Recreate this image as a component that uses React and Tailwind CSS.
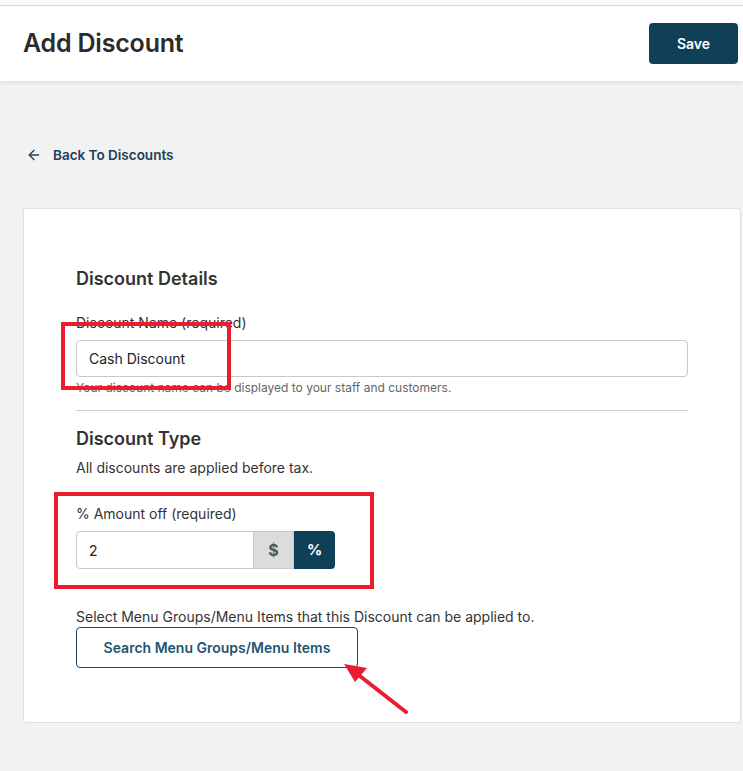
import { ArrowLeft } from "lucide-react";

const font = { fontFamily: "Inter, 'Noto Sans', sans-serif" };

const AddDiscount = () => {
  return (
    <div className="relative min-h-screen bg-[#f2f2f2] text-[#333]" style={font}>
      {/* Top strip */}
      <div className="h-[6px] bg-[#fafafa] border-b border-[#dcdcdc]" />

      {/* Header */}
      <div className="h-[75px] bg-white shadow-[0_2px_4px_rgba(0,0,0,0.08)] flex items-center justify-between pl-[23px] pr-[5px]">
        <h1 className="text-[25px] font-semibold text-[#2b2b2b] tracking-[-0.2px]">Add Discount</h1>
        <button className="w-[89px] h-[41px] rounded-[4px] bg-[#0f4058] text-white text-[14px] font-semibold">
          Save
        </button>
      </div>

      {/* Back link */}
      <div className="mt-[64px] ml-[26px] flex items-center gap-[11px] text-[#1b4059]">
        <ArrowLeft className="w-[16px] h-[16px]" strokeWidth={2} />
        <span className="text-[13.5px] font-semibold">Back To Discounts</span>
      </div>

      {/* Card */}
      <div className="mt-[43px] ml-[23px] w-[718px] bg-white border border-[#e0e0e0] rounded-[3px] pt-[58px] pb-[54px] px-[52px]">
        <h2 className="text-[18px] font-semibold text-[#333] leading-[24px]">Discount Details</h2>

        <label className="block mt-[23px] text-[14px] text-[#333] leading-[18px]">Discount Name (required)</label>
        <input
          className="mt-[8px] block w-[612px] h-[37px] border border-[#c8c8c8] rounded-[4px] px-[12px] text-[14px] text-[#222] outline-none"
          defaultValue="Cash Discount"
          style={font}
        />
        <p className="mt-[4px] text-[12px] text-[#666] leading-[14px]">
          Your discount name can be displayed to your staff and customers.
        </p>

        <div className="mt-[15px] w-[612px] border-t border-[#cfcfcf]" />

        <h2 className="mt-[16px] text-[18px] font-semibold text-[#333] leading-[24px]">Discount Type</h2>
        <p className="mt-[8px] text-[14px] text-[#333] leading-[18px]">All discounts are applied before tax.</p>

        <label className="block mt-[28px] text-[14px] text-[#333] leading-[18px]">% Amount off (required)</label>
        <div className="mt-[8px] flex h-[38px]">
          <input
            className="w-[178px] h-full border border-[#c8c8c8] rounded-l-[4px] px-[12px] text-[14px] text-[#222] outline-none"
            defaultValue="2"
            style={font}
          />
          <button className="w-[40px] h-full bg-[#dcdcdc] border border-[#c8c8c8] border-l-0 text-[#555] text-[16px] font-bold">
            $
          </button>
          <button className="w-[41px] h-full bg-[#0f4058] rounded-r-[4px] text-white text-[15px] font-bold">
            %
          </button>
        </div>

        <p className="mt-[39px] text-[14px] text-[#333] leading-[18px]">
          Select Menu Groups/Menu Items that this Discount can be applied to.
        </p>
        <button className="mt-[1px] w-[282px] h-[41px] border border-[#1f4b62] rounded-[4px] text-[14px] font-semibold text-[#1e5570]">
          Search Menu Groups/Menu Items
        </button>
      </div>

      {/* Annotations */}
      <div className="absolute left-[61px] top-[322px] w-[170px] h-[68px] border-[4px] border-[#ec1c2f] pointer-events-none" />
      <div className="absolute left-[54px] top-[492px] w-[320px] h-[97px] border-[4px] border-[#ec1c2f] pointer-events-none" />
      <svg className="absolute left-0 top-0 pointer-events-none" width="743" height="771">
        <line x1="406" y1="712" x2="356" y2="673" stroke="#ec1c2f" strokeWidth="4" strokeLinecap="round" />
        <polygon points="344,664 367,668 355,682" fill="#ec1c2f" />
      </svg>
    </div>
  );
};

export default AddDiscount;
